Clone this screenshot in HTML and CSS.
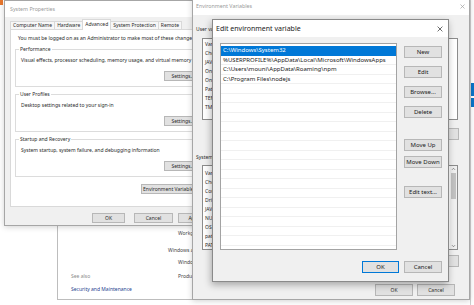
FILE: index.html
```html
<!DOCTYPE html>
<html lang="en">
<head>
    <meta charset="UTF-8">
    <meta name="viewport" content="width=device-width, initial-scale=1.0">
    <title>Edit environment variable</title>
    <link rel="stylesheet" href="styles.css">
</head>
<body>
<div class="desktop">
    <div class="corner"></div>
    <div class="strip">
        <span class="tile"></span>
        <span class="tile short"></span>
    </div>

    <!-- control panel "System" page, mostly hidden -->
    <div class="win cp">
        <div class="cp-body">
            <div class="cp-side">
                <p class="muted">See also</p>
                <p class="link">Security and Maintenance</p>
            </div>
            <div class="cp-info">
                <p class="cp-r1">Workgroup:</p>
                <p class="cp-r2">Windows activation</p>
                <p class="cp-r3">Windows is activated</p>
                <p class="cp-r4">Product ID:</p>
            </div>
        </div>
    </div>

    <!-- System Properties -->
    <div class="win sp">
        <div class="titlebar">System Properties</div>
        <div class="tabs">
            <span class="tab">Computer Name</span>
            <span class="tab">Hardware</span>
            <span class="tab active">Advanced</span>
            <span class="tab">System Protection</span>
            <span class="tab">Remote</span>
        </div>
        <div class="tab-panel">
            <p class="admin-note">You must be logged on as an Administrator to make most of these changes.</p>
            <div class="group">
                <span class="group-title">Performance</span>
                <p class="group-text">Visual effects, processor scheduling, memory usage, and virtual memory</p>
                <span class="btn settings">Settings...</span>
            </div>
            <div class="group">
                <span class="group-title">User Profiles</span>
                <p class="group-text">Desktop settings related to your sign-in</p>
                <span class="btn settings">Settings...</span>
            </div>
            <div class="group">
                <span class="group-title">Startup and Recovery</span>
                <p class="group-text">System startup, system failure, and debugging information</p>
                <span class="btn settings">Settings...</span>
            </div>
            <div class="env-row">
                <span class="btn env-btn">Environment Variables...</span>
            </div>
        </div>
        <div class="sp-footer">
            <span class="btn sp-ok">OK</span>
            <span class="btn sp-cancel">Cancel</span>
            <span class="btn sp-apply">Apply</span>
        </div>
    </div>

    <!-- Environment Variables -->
    <div class="win ev">
        <div class="titlebar">
            <span>Environment Variables</span>
            <svg class="close" width="5" height="5" viewBox="0 0 5 5"><path d="M0.5 0.5L4.5 4.5M4.5 0.5L0.5 4.5" stroke="#a0a0a0" stroke-width="0.7"/></svg>
        </div>
        <div class="ev-body">
            <p class="ev-label">User variables for mouni</p>
            <div class="var-list user-list">
                <div class="var-rows">
                    <div class="var-row head">Variable</div>
                    <div class="var-row">ChocolateyLastPathUpdate</div>
                    <div class="var-row">JAVA_HOME</div>
                    <div class="var-row">OneDrive</div>
                    <div class="var-row">OneDriveConsumer</div>
                    <div class="var-row">Path</div>
                    <div class="var-row">TEMP</div>
                    <div class="var-row">TMP</div>
                </div>
            </div>
            <div class="ev-buttons">
                <span class="btn ev-btn">Delete</span>
            </div>
            <p class="ev-label sys-label">System variables</p>
            <div class="var-list sys-list">
                <div class="var-rows">
                    <div class="var-row head">Variable</div>
                    <div class="var-row">ChocolateyInstall</div>
                    <div class="var-row">ComSpec</div>
                    <div class="var-row">DriverData</div>
                    <div class="var-row">JAVA_HOME</div>
                    <div class="var-row">NUMBER_OF_PROCESSORS</div>
                    <div class="var-row">OS</div>
                    <div class="var-row">path</div>
                    <div class="var-row">PATHEXT</div>
                </div>
                <div class="scrollbar">
                    <svg width="7" height="6" viewBox="0 0 7 6"><path d="M2 3.8L3.5 2.3L5 3.8" fill="none" stroke="#606060" stroke-width="0.7"/></svg>
                    <span class="thumb"></span>
                    <span class="track"></span>
                    <svg width="7" height="6" viewBox="0 0 7 6"><path d="M2 2.2L3.5 3.7L5 2.2" fill="none" stroke="#606060" stroke-width="0.7"/></svg>
                </div>
            </div>
            <div class="ev-buttons sys-buttons">
                <span class="btn ev-btn">Delete</span>
            </div>
            <div class="ev-footer">
                <span class="btn ev-btn">OK</span>
                <span class="btn ev-btn">Cancel</span>
            </div>
        </div>
    </div>

    <!-- Edit environment variable -->
    <div class="win ed">
        <div class="titlebar">
            <span>Edit environment variable</span>
            <svg class="close" width="6" height="6" viewBox="0 0 5 5"><path d="M0.5 0.5L4.5 4.5M4.5 0.5L0.5 4.5" stroke="#333" stroke-width="0.6"/></svg>
        </div>
        <div class="ed-body">
            <div class="path-list">
                <div class="path-row selected">C:\Windows\System32</div>
                <div class="path-row">%USERPROFILE%\AppData\Local\Microsoft\WindowsApps</div>
                <div class="path-row">C:\Users\mouni\AppData\Roaming\npm</div>
                <div class="path-row">C:\Program Files\nodejs</div>
                <div class="path-row"></div>
                <div class="path-row"></div>
                <div class="path-row"></div>
                <div class="path-row"></div>
                <div class="path-row"></div>
                <div class="path-row"></div>
                <div class="path-row"></div>
                <div class="path-row"></div>
                <div class="path-row"></div>
                <div class="path-row"></div>
                <div class="path-row"></div>
                <div class="path-row"></div>
                <div class="path-row"></div>
                <div class="path-row"></div>
                <div class="path-row"></div>
                <div class="path-row"></div>
                <div class="path-row"></div>
            </div>
            <div class="ed-side">
                <span class="btn ed-btn">New</span>
                <span class="btn ed-btn gap-s">Edit</span>
                <span class="btn ed-btn gap-s">Browse...</span>
                <span class="btn ed-btn gap-s">Delete</span>
                <span class="btn ed-btn gap-l">Move Up</span>
                <span class="btn ed-btn gap-xs">Move Down</span>
                <span class="btn ed-btn gap-m">Edit text...</span>
            </div>
        </div>
        <div class="ed-footer">
            <span class="btn ed-btn ed-ok">OK</span>
            <span class="btn ed-btn">Cancel</span>
        </div>
    </div>
</div>
</body>
</html>
```

FILE: styles.css
```css
body {
    margin: 0;
    font-family: "Noto Sans", "DejaVu Sans", sans-serif;
    font-size: 5px;
    color: #2b2b2b;
    background-color: #ffffff;
}

p {
    margin: 0;
}

.desktop {
    position: relative;
    width: 474px;
    height: 305px;
    overflow: hidden;
    background-color: #ffffff;
}

.corner {
    position: absolute;
    left: 0;
    top: 0;
    width: 3px;
    height: 5px;
    background-color: #e8772e;
}

.strip {
    position: absolute;
    left: 470px;
    top: 0;
    width: 4px;
    height: 305px;
    box-sizing: border-box;
    border-left: 1px solid #cfcfcf;
    padding-top: 83px;
    display: flex;
    flex-direction: column;
    gap: 2px;
}

.strip .tile {
    height: 13px;
    background-color: #0a74c9;
}

.strip .tile.short {
    height: 9px;
}

/* windows */
.win {
    position: absolute;
    box-sizing: border-box;
    border: 1px solid #a6a6a6;
    background-color: #f0f0f0;
    display: flex;
    flex-direction: column;
    box-shadow: 0 1px 6px rgba(0, 0, 0, 0.18);
}

.titlebar {
    flex: none;
    background-color: #ffffff;
    color: #9a9a9a;
    font-size: 5.3px;
    white-space: nowrap;
    display: flex;
    align-items: center;
    justify-content: space-between;
}

.btn {
    flex: none;
    box-sizing: border-box;
    height: 10px;
    border: 1px solid #b7b7b7;
    background-color: #e1e1e1;
    display: flex;
    align-items: center;
    justify-content: center;
    white-space: nowrap;
    overflow: hidden;
}

/* control panel */
.cp {
    left: 57px;
    top: 150px;
    width: 170px;
    height: 150px;
    background-color: #ffffff;
    border-color: #bdbdbd;
    box-shadow: none;
}

.cp-body {
    display: flex;
    height: 100%;
    padding-left: 13px;
    line-height: 8px;
    color: #444444;
}

.cp-side {
    width: 97px;
    flex: none;
    display: flex;
    flex-direction: column;
    justify-content: flex-end;
    padding-bottom: 6px;
}

.cp-side .muted {
    color: #8c8c8c;
    margin-bottom: 5px;
}

.cp-side .link {
    color: #1f3f8f;
    white-space: nowrap;
}

.cp-info {
    padding-top: 78px;
    white-space: nowrap;
}

.cp-r1, .cp-r3, .cp-r4 {
    padding-left: 10px;
}

.cp-r2 {
    margin-top: 9px;
}

.cp-r3 {
    margin-top: 4px;
}

.cp-r4 {
    margin-top: 6px;
}

/* System Properties */
.sp {
    left: 4px;
    top: 0;
    width: 214px;
    height: 226px;
}

.sp .titlebar {
    height: 16px;
    line-height: 14px;
    padding-left: 5px;
}

.tabs {
    display: flex;
    align-items: flex-end;
    height: 12px;
    margin-left: 6px;
}

.tab {
    box-sizing: border-box;
    height: 8px;
    line-height: 7px;
    padding: 0 2px;
    margin-left: -1px;
    border: 1px solid #d9d9d9;
    border-bottom: none;
    background-color: #f7f7f7;
    white-space: nowrap;
}

.tab.active {
    height: 11px;
    line-height: 9px;
    margin-bottom: -1px;
    background-color: #ffffff;
    position: relative;
}

.tab-panel {
    box-sizing: border-box;
    height: 178px;
    margin: 0 5px;
    padding: 4px 4px 0;
    background-color: #ffffff;
    border: 1px solid #d9d9d9;
    white-space: nowrap;
    overflow: hidden;
}

.admin-note {
    line-height: 8px;
    margin-left: 3px;
}

.group {
    box-sizing: border-box;
    width: 193px;
    height: 38px;
    margin-top: 7px;
    padding-left: 5px;
    border: 1px solid #dcdcdc;
    display: flex;
    flex-direction: column;
}

.group-title {
    align-self: flex-start;
    line-height: 8px;
    margin: -5px 0 0 -2px;
    padding: 0 1px;
    background-color: #ffffff;
}

.group-text {
    line-height: 8px;
    margin-top: 3px;
}

.group .settings {
    align-self: flex-end;
    width: 38px;
    margin-top: 7px;
    margin-right: 5px;
}

.env-row {
    width: 193px;
    margin-top: 7px;
    padding-right: 6px;
    box-sizing: border-box;
    display: flex;
    justify-content: flex-end;
}

.env-btn {
    width: 61px;
}

.sp-footer {
    display: flex;
    margin-top: 6px;
    padding-left: 87px;
}

.sp-ok {
    width: 33px;
    margin-right: 9px;
}

.sp-cancel {
    width: 39px;
    margin-right: 5px;
}

.sp-apply {
    width: 34px;
}

/* Environment Variables */
.ev {
    left: 192px;
    top: -4px;
    width: 278px;
    height: 304px;
}

.ev .titlebar {
    height: 18px;
    padding: 0 4px 0 3px;
}

.ev-body {
    padding: 0 10px 0 3px;
    display: flex;
    flex-direction: column;
}

.ev-label {
    line-height: 8px;
    margin-top: 10px;
    white-space: nowrap;
}

.ev-label.sys-label {
    margin-top: 13px;
}

.var-list {
    box-sizing: border-box;
    width: 256px;
    margin-left: 6px;
    border: 1px solid #8c8c8c;
    background-color: #ffffff;
    display: flex;
    overflow: hidden;
}

.user-list {
    height: 82px;
    margin-top: 5px;
}

.user-list .var-rows {
    padding-top: 1px;
}

.sys-list {
    height: 85px;
    margin-top: 4px;
}

.sys-list .var-rows {
    padding-top: 3px;
}

.var-rows {
    flex: 1;
    min-width: 0;
}

.var-row {
    height: 9px;
    line-height: 9px;
    padding-left: 2px;
    white-space: nowrap;
}

.scrollbar {
    width: 7px;
    flex: none;
    background-color: #f0f0f0;
    display: flex;
    flex-direction: column;
}

.scrollbar svg {
    flex: none;
}

.scrollbar .thumb {
    height: 26px;
    margin: 1px 1px 0;
    background-color: #c2c2c2;
}

.scrollbar .track {
    flex: 1;
}

.ev-buttons {
    display: flex;
    justify-content: flex-end;
    gap: 6px;
    width: 263px;
    margin-top: 8px;
}

.ev-buttons.sys-buttons {
    margin-top: 5px;
}

.ev-btn {
    width: 38px;
    height: 12px;
}

.ev-footer {
    display: flex;
    justify-content: flex-end;
    gap: 4px;
    margin-top: 17px;
    margin-right: 4px;
}

/* Edit environment variable */
.ed {
    left: 212px;
    top: 19px;
    width: 237px;
    height: 263px;
    font-size: 6px;
    color: #1a1a1a;
    border-color: #8a8a8a;
    box-shadow: -1px 3px 7px rgba(0, 0, 0, 0.3);
}

.ed .titlebar {
    height: 17px;
    padding: 0 5px 0 3px;
    font-size: 7px;
    color: #222222;
}

.ed-body {
    display: flex;
    gap: 7px;
    padding: 6px 6px 0 7px;
}

.path-list {
    box-sizing: border-box;
    width: 177px;
    height: 207px;
    padding-top: 2px;
    border: 1px solid #a3a3a3;
    background-color: #ffffff;
    overflow: hidden;
}

.path-row {
    box-sizing: border-box;
    height: 9.5px;
    line-height: 9px;
    padding-left: 2px;
    border-bottom: 1px solid #f0f0f0;
    white-space: nowrap;
    overflow: hidden;
}

.path-row.selected {
    background-color: #0078d7;
    border-bottom-color: #0078d7;
    color: #ffffff;
}

.ed-side {
    width: 38px;
    padding-top: 3px;
    display: flex;
    flex-direction: column;
}

.ed-btn {
    width: 38px;
    height: 12px;
}

.ed-side .gap-xs {
    margin-top: 5px;
}

.ed-side .gap-s {
    margin-top: 8px;
}

.ed-side .gap-m {
    margin-top: 18px;
}

.ed-side .gap-l {
    margin-top: 21px;
}

.ed-footer {
    display: flex;
    justify-content: flex-end;
    gap: 5px;
    margin-top: 11px;
    padding-right: 6px;
}

.ed-ok {
    width: 37px;
    border-color: #0078d7;
}
```
